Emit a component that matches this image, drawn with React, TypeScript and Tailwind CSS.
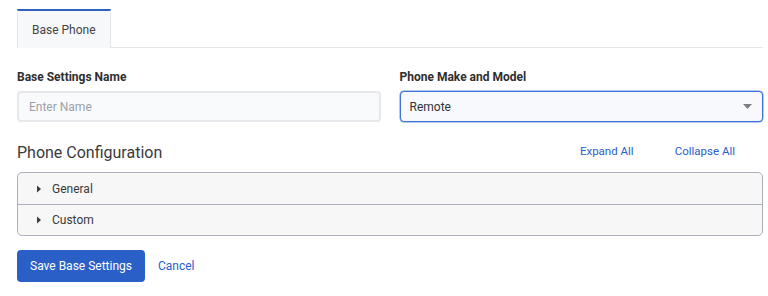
import React, { useState } from "react";

const sections = ["General", "Custom"];

function Caret() {
  return (
    <svg width="6" height="8" viewBox="0 0 6 8" className="shrink-0">
      <path d="M1 0.5 L5 4 L1 7.5 Z" fill="#3b3b3b" />
    </svg>
  );
}

export default function App() {
  const [name, setName] = useState("");

  return (
    <div className="min-h-[296px] bg-white pt-[9px] pl-[17px] pr-[5px] font-['Roboto',sans-serif] text-[#333]">
      {/* Tabs */}
      <div className="flex border-b border-[#e3e6ea]">
        <div className="-mb-px flex h-[39px] items-center border-x border-t-2 border-x-[#e3e6ea] border-t-[#2a60c8] bg-[#f7f8fa] px-[14px] text-[12px] text-[#444]">
          Base Phone
        </div>
      </div>

      {/* Fields */}
      <div className="mt-[21px] grid grid-cols-2 gap-[19px]">
        <div>
          <label className="block text-[12px] font-bold leading-4 text-[#2e2e2e]">Base Settings Name</label>
          <input
            value={name}
            onChange={(e) => setName(e.target.value)}
            placeholder="Enter Name"
            className="mt-[6px] h-[31px] w-full rounded-[4px] border-2 border-[#e6e8eb] bg-[#f9fafb] px-[10px] text-[12px] text-[#333] outline-none placeholder:text-[#9aa1ab]"
          />
        </div>
        <div>
          <label className="block text-[12px] font-bold leading-4 text-[#2e2e2e]">Phone Make and Model</label>
          <div className="mt-[6px] flex h-[31px] items-center justify-between rounded-[4px] border border-[#3d73d9] bg-[#f8f9fc] pl-[9px] pr-[10px] text-[12px] text-[#333] shadow-[0_0_0_0.5px_#6f97e3]">
            <span>Remote</span>
            <svg width="9" height="5" viewBox="0 0 9 5">
              <path d="M0 0 L9 0 L4.5 5 Z" fill="#7a7f87" />
            </svg>
          </div>
        </div>
      </div>

      {/* Phone Configuration */}
      <div className="mt-[21px] flex items-start justify-between">
        <h2 className="text-[16px] leading-5 text-[#3a3a3a]">Phone Configuration</h2>
        <div className="flex gap-[41px] pr-[28px] text-[11.5px] leading-4 text-[#2a60c8]">
          <button className="cursor-pointer">Expand All</button>
          <button className="cursor-pointer">Collapse All</button>
        </div>
      </div>

      <div className="mt-[9px] overflow-hidden rounded-[5px] border border-[#aab1bd] bg-[#f7f7f7]">
        {sections.map((s, i) => (
          <div
            key={s}
            className={
              "flex h-[31px] items-center gap-[10px] pl-[18px] text-[12px] text-[#3a3a3a] " +
              (i > 0 ? "border-t border-[#aab1bd]" : "")
            }
          >
            <Caret />
            <span>{s}</span>
          </div>
        ))}
      </div>

      {/* Actions */}
      <div className="mt-[14px] flex items-center gap-[13px]">
        <button className="h-[32px] rounded-[4px] bg-[#2a5fc8] px-[13px] text-[12px] text-white">
          Save Base Settings
        </button>
        <button className="text-[12px] text-[#2a60c8]">Cancel</button>
      </div>
    </div>
  );
}
